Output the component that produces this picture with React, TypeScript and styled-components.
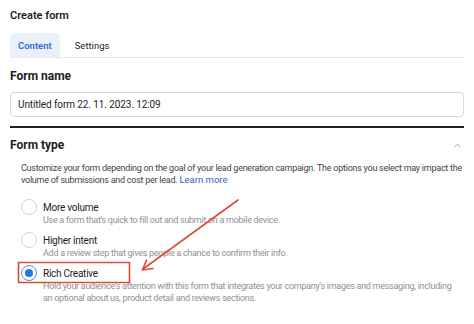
import React from "react";
import styled, { createGlobalStyle } from "styled-components";

const GlobalStyle = createGlobalStyle`
  body {
    margin: 0;
    background: #ffffff;
    font-family: Roboto, "Liberation Sans", Arial, sans-serif;
    color: #1c1e21;
  }
`;

const options = [
  {
    id: "volume",
    label: "More volume",
    desc: "Use a form that's quick to fill out and submit on a mobile device.",
  },
  {
    id: "intent",
    label: "Higher intent",
    desc: "Add a review step that gives people a chance to confirm their info.",
  },
  {
    id: "rich",
    label: "Rich Creative",
    desc: "Hold your audience's attention with this form that integrates your company's images and messaging, including an optional about us, product detail and reviews sections.",
  },
];

const App = () => {
  const selected = "rich";
  return (
    <Page>
      <GlobalStyle />
      <Title>Create form</Title>
      <Tabs>
        <Tab active>Content</Tab>
        <Tab>Settings</Tab>
      </Tabs>

      <SectionTitle>Form name</SectionTitle>
      <NameInput defaultValue="Untitled form 22. 11. 2023. 12:09" />

      <Divider />

      <SectionHead>
        <SectionTitle as="div">Form type</SectionTitle>
        <Chevron viewBox="0 0 8 5">
          <polyline points="0.5,4.5 4,1 7.5,4.5" />
        </Chevron>
      </SectionHead>
      <Intro>
        Customize your form depending on the goal of your lead generation
        campaign. The options you select may impact the volume of submissions
        and cost per lead. <Link href="#">Learn more</Link>
      </Intro>

      <OptionList>
        {options.map((o) => (
          <Option key={o.id}>
            <OptionHead>
              <Radio checked={o.id === selected} />
              <OptionLabel>{o.label}</OptionLabel>
            </OptionHead>
            <OptionDesc>{o.desc}</OptionDesc>
          </Option>
        ))}
      </OptionList>

      {/* red annotation drawn over the screenshot */}
      <Annotation viewBox="0 0 474 324">
        <rect x="18.5" y="262.5" width="111" height="20" />
        <line x1="238" y1="200" x2="143" y2="269" />
        <polyline points="153,268.5 142.5,270 146.5,260" />
      </Annotation>
    </Page>
  );
};

export default App;

const Page = styled.div`
  position: relative;
  width: 474px;
  height: 324px;
  overflow: hidden;
  padding: 8px 10px 0;
  box-sizing: border-box;
`;

const Title = styled.div`
  font-size: 11px;
  font-weight: 600;
  line-height: 16px;
`;

const Tabs = styled.div`
  display: flex;
  gap: 7px;
  margin-top: 9px;
  border-bottom: 1px solid #e6e8eb;
`;

const Tab = styled.div<{ active?: boolean }>`
  height: 24px;
  display: flex;
  align-items: center;
  padding: 0 8px;
  font-size: 9.5px;
  border-radius: 5px 5px 0 0;
  font-weight: ${(p) => (p.active ? 600 : 400)};
  color: ${(p) => (p.active ? "#2f6bcc" : "#1c1e21")};
  background: ${(p) => (p.active ? "#e9f0fa" : "transparent")};
`;

const SectionTitle = styled.h2`
  margin: 10px 0 0;
  font-size: 12px;
  font-weight: 700;
  line-height: 16px;
`;

const NameInput = styled.input`
  display: block;
  width: 100%;
  box-sizing: border-box;
  height: 25px;
  margin-top: 8px;
  padding: 0 7px;
  border: 1px solid #d6d9dd;
  border-radius: 4px;
  font-family: inherit;
  font-size: 10px;
  letter-spacing: -0.1px;
  color: #1c1e21;
  outline: none;
`;

const Divider = styled.div`
  height: 2px;
  margin-top: 9px;
  background: #1c1e21;
`;

const SectionHead = styled.div`
  display: flex;
  align-items: center;
  justify-content: space-between;
  margin-top: 9px;
  padding-right: 3px;

  & > div {
    margin: 0;
  }
`;

const Chevron = styled.svg`
  width: 7px;
  height: 5px;
  fill: none;
  stroke: #8a8d91;
  stroke-width: 1;
`;

const Intro = styled.p`
  margin: 9px 0 0;
  padding-left: 11px;
  font-size: 9px;
  letter-spacing: -0.25px;
  line-height: 12px;
  color: #3f4247;
`;

const Link = styled.a`
  color: #2f62c0;
  text-decoration: none;
  font-size: 9.5px;
  letter-spacing: 0;
`;

const OptionList = styled.div`
  display: flex;
  flex-direction: column;
  gap: 6px;
  margin-top: 13px;
  padding-left: 11px;
`;

const Option = styled.div`
  display: flex;
  flex-direction: column;
`;

const OptionHead = styled.div`
  display: flex;
  align-items: center;
  gap: 6px;
  height: 16px;
`;

const Radio = styled.span<{ checked?: boolean }>`
  position: relative;
  width: 16px;
  height: 16px;
  box-sizing: border-box;
  border-radius: 50%;
  flex-shrink: 0;
  border: 1px solid ${(p) => (p.checked ? "#5b8ee6" : "#d3d6da")};
  background: #ffffff;

  &::after {
    content: "";
    display: ${(p) => (p.checked ? "block" : "none")};
    position: absolute;
    top: 3px;
    left: 3px;
    width: 8px;
    height: 8px;
    border-radius: 50%;
    background: #2a74e6;
  }
`;

const OptionLabel = styled.span`
  font-size: 10px;
  letter-spacing: -0.25px;
  color: #1c1e21;
`;

const OptionDesc = styled.div`
  margin-top: -1px;
  padding-left: 22px;
  max-width: 410px;
  font-size: 9px;
  letter-spacing: -0.28px;
  line-height: 12px;
  color: #8d9096;
`;

const Annotation = styled.svg`
  position: absolute;
  top: 0;
  left: 0;
  width: 474px;
  height: 324px;
  pointer-events: none;
  fill: none;
  stroke: #df4a32;
  stroke-width: 1.6;
  stroke-linejoin: round;
  stroke-linecap: round;
`;
